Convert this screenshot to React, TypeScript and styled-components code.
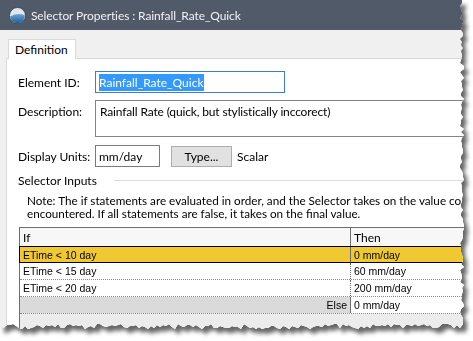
import styled, { createGlobalStyle } from "styled-components";

const GlobalStyle = createGlobalStyle`
  html, body {
    margin: 0;
    padding: 0;
    background: #ffffff;
    overflow: hidden;
  }
`;

// torn paper edge along the right and bottom of the screenshot
function tornEdge(): string {
    const pts: string[] = ["0px 0px"];
    let seed = 7;
    const rnd = () => {
        seed = (seed * 9301 + 49297) % 233280;
        return seed / 233280;
    };
    for (let y = 0; y <= 326; y += 3) {
        pts.push(`${460 + Math.round(rnd() * 4)}px ${y}px`);
    }
    for (let x = 460; x >= 0; x -= 3) {
        pts.push(`${x}px ${324 + Math.round(rnd() * 5)}px`);
    }
    pts.push("0px 330px");
    return `polygon(${pts.join(", ")})`;
}

const EDGE = tornEdge();

const Stage = styled.div`
  width: 473px;
  height: 341px;
  background: #ffffff;
  overflow: hidden;
`;

const ShadowWrap = styled.div`
  filter: drop-shadow(4px 5px 2px rgba(0, 0, 0, 0.6));
`;

const Window = styled.div`
  width: 470px;
  height: 332px;
  background: #f0f0f0;
  clip-path: ${EDGE};
  display: flex;
  flex-direction: column;
  font-family: Lato, "Noto Sans", sans-serif;
  color: #000;
`;

const TitleBar = styled.div`
  height: 30px;
  background: #505a68;
  display: flex;
  align-items: center;
  padding-left: 9px;
  gap: 5px;
  color: #f2f2f2;
  font-size: 12px;
  letter-spacing: -0.1px;
  flex-shrink: 0;
`;

const TabStrip = styled.div`
  height: 28px;
  display: flex;
  align-items: flex-end;
  padding-left: 8px;
  flex-shrink: 0;
`;

const Tab = styled.div`
  height: 19px;
  padding: 0 7px 0 6px;
  background: #ffffff;
  border: 1px solid #d9d9d9;
  border-bottom: none;
  font-size: 12px;
  display: flex;
  align-items: center;
  margin-bottom: -1px;
  position: relative;
`;

const Panel = styled.div`
  flex: 1;
  margin-left: 6px;
  background: #ffffff;
  border-top: 1px solid #d9d9d9;
  border-left: 1px solid #d9d9d9;
  padding: 12px 0 0 11px;
  font-size: 12px;
`;

const FormRow = styled.div<{ $top?: number; $align?: string }>`
  display: flex;
  align-items: ${p => p.$align || "center"};
  margin-top: ${p => p.$top || 0}px;
`;

const Label = styled.div<{ $pad?: number }>`
  width: 77px;
  flex-shrink: 0;
  padding-top: ${p => p.$pad || 0}px;
`;

const TextBox = styled.div<{ $w: number; $focus?: boolean }>`
  width: ${p => p.$w}px;
  height: 22px;
  box-sizing: border-box;
  border: 1px solid ${p => (p.$focus ? "#3c7fd0" : "#7a7a7a")};
  padding: 0 3px;
  display: flex;
  align-items: center;
  flex-shrink: 0;
`;

const Selected = styled.span`
  background: #3399ff;
  color: #ffffff;
  padding: 1px 0;
`;

const TextArea = styled.div`
  width: 380px;
  height: 37px;
  box-sizing: border-box;
  border: 1px solid #828282;
  padding: 3px 4px;
  letter-spacing: -0.15px;
  flex-shrink: 0;
`;

const Button = styled.div`
  width: 61px;
  height: 21px;
  box-sizing: border-box;
  margin-left: 11px;
  background: #e1e1e1;
  border: 1px solid #adadad;
  display: flex;
  align-items: center;
  justify-content: center;
`;

const Unit = styled.div`
  margin-left: 5px;
`;

const GroupHeader = styled.div`
  display: flex;
  align-items: center;
  margin-top: 6px;
  gap: 17px;

  &::after {
    content: "";
    flex: 1;
    height: 1px;
    background: #dcdcdc;
  }
`;

const Note = styled.div`
  margin: 6px 0 0 9px;
  font-size: 11.7px;
  line-height: 13px;
  white-space: nowrap;
`;

const Table = styled.div`
  margin: 7px 0 0 1px;
  width: 460px;
  border-left: 1px solid #6e6e6e;
  border-top: 1px solid #6e6e6e;
  font-family: "Liberation Sans", Arial, sans-serif;
  font-size: 10.5px;
`;

const TableRow = styled.div<{ $bg?: string; $sel?: boolean; $line?: string }>`
  display: grid;
  grid-template-columns: 330px 1fr;
  height: ${p => (p.$sel ? 15 : 16)}px;
  background: ${p => p.$bg || "#ffffff"};
  border-bottom: 1px ${p => p.$line || "dotted"} ${p => (p.$sel ? "#000" : "#8a8a8a")};
  border-top: ${p => (p.$sel ? "1px solid #000" : "none")};
  border-left: ${p => (p.$sel ? "1px solid #000" : "none")};
  margin-left: ${p => (p.$sel ? "-1px" : "0")};
`;

const Cell = styled.div<{ $right?: boolean; $bg?: string; $sep?: string }>`
  display: flex;
  align-items: center;
  justify-content: ${p => (p.$right ? "flex-end" : "flex-start")};
  padding: 0 3px;
  background: ${p => p.$bg || "transparent"};
  border-left: ${p => (p.$sep ? `1px ${p.$sep} #6e6e6e` : "none")};
  white-space: nowrap;
  overflow: hidden;
`;

const HeaderRow = styled(TableRow)`
  height: 18px;
  background: #f7f7f7;
  border-bottom: none;
  font-family: Lato, "Noto Sans", sans-serif;
  font-size: 12px;
`;

function AppIcon() {
    return (
        <svg width="17" height="17" viewBox="0 0 17 17">
            <defs>
                <linearGradient id="ib" x1="0" y1="0" x2="0" y2="1">
                    <stop offset="0" stopColor="#6fa6d8"/>
                    <stop offset="1" stopColor="#1f5b9a"/>
                </linearGradient>
            </defs>
            <circle cx="8.5" cy="8.5" r="8" fill="#dfe6ee" stroke="#2b3a4c" strokeWidth="0.8"/>
            <path d="M1.2 9.5 Q8.5 5.5 15.8 8.2 A7.3 7.3 0 0 1 1.2 9.5 Z" fill="url(#ib)"/>
        </svg>
    );
}

const rows = [
    {cond: "ETime < 10 day", value: "0 mm/day", sel: true},
    {cond: "ETime < 15 day", value: "60 mm/day"},
    {cond: "ETime < 20 day", value: "200 mm/day"},
];

export default function App() {
    return (
        <Stage>
            <GlobalStyle/>
            <ShadowWrap>
                <Window>
                    <TitleBar>
                        <AppIcon/>
                        Selector Properties : Rainfall_Rate_Quick
                    </TitleBar>
                    <TabStrip>
                        <Tab>Definition</Tab>
                    </TabStrip>
                    <Panel>
                        <FormRow>
                            <Label>Element ID:</Label>
                            <TextBox $w={190} $focus><Selected>Rainfall_Rate_Quick</Selected></TextBox>
                        </FormRow>
                        <FormRow $top={7} $align="flex-start">
                            <Label $pad={4}>Description:</Label>
                            <TextArea>Rainfall Rate (quick, but stylistically inccorect)</TextArea>
                        </FormRow>
                        <FormRow $top={8}>
                            <Label>Display Units:</Label>
                            <TextBox $w={65}>mm/day</TextBox>
                            <Button>Type...</Button>
                            <Unit>Scalar</Unit>
                        </FormRow>
                        <GroupHeader>Selector Inputs</GroupHeader>
                        <Note>
                            Note: The if statements are evaluated in order, and the Selector takes on the value corresponding to the first true statement
                            <br/>
                            encountered. If all statements are false, it takes on the final value.
                        </Note>
                        <Table>
                            <HeaderRow>
                                <Cell>If</Cell>
                                <Cell $sep="solid">Then</Cell>
                            </HeaderRow>
                            {rows.map(r => (
                                <TableRow key={r.cond} $sel={r.sel} $bg={r.sel ? "#f0c932" : undefined}
                                          $line={r.sel ? "solid" : "dotted"}>
                                    <Cell>{r.cond}</Cell>
                                    <Cell $sep={r.sel ? "solid" : "dotted"}>{r.value}</Cell>
                                </TableRow>
                            ))}
                            <TableRow>
                                <Cell $right $bg="#dadada">Else</Cell>
                                <Cell $sep="solid">0 mm/day</Cell>
                            </TableRow>
                            <TableRow $bg="#ececec">
                                <Cell/>
                                <Cell/>
                            </TableRow>
                        </Table>
                    </Panel>
                </Window>
            </ShadowWrap>
        </Stage>
    );
}
